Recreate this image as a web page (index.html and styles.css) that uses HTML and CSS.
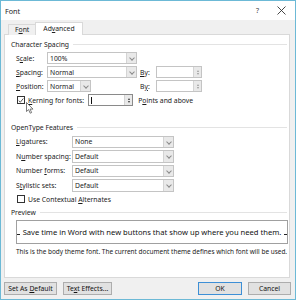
FILE: index.html
```html
<!DOCTYPE html>
<html>
<head>
<meta charset="utf-8">
<link rel="stylesheet" href="styles.css">
</head>
<body>
<div class="window">
  <div class="titlebar">
    <span class="title">Font</span>
    <span class="tb-help">?</span>
    <span class="tb-close"><svg width="9" height="9" viewBox="0 0 9 9"><path d="M0.5 0.5L8.5 8.5M8.5 0.5L0.5 8.5" stroke="#333" stroke-width="0.9"/></svg></span>
  </div>
  <div class="tabs">
    <div class="tab">F<u>o</u>nt</div>
    <div class="tab active">Ad<u>v</u>anced</div>
  </div>
  <div class="panel">
    <div class="group-head"><span>Character Spacing</span><i></i></div>
    <div class="row cs">
      <label class="lab-cs">S<u>c</u>ale:</label>
      <div class="select w90"><span>100%</span><b class="arr"></b></div>
    </div>
    <div class="row cs">
      <label class="lab-cs"><u>S</u>pacing:</label>
      <div class="select w90"><span>Normal</span><b class="arr"></b></div>
      <label class="by"><u>B</u>y:</label>
      <div class="spin"><span></span><b class="sp"><i class="up"></i><i class="dn"></i></b></div>
    </div>
    <div class="row cs">
      <label class="lab-cs"><u>P</u>osition:</label>
      <div class="slot90"><div class="select w44"><span>Normal</span><b class="arr"></b></div></div>
      <label class="by">B<u>y</u>:</label>
      <div class="spin"><span></span><b class="sp"><i class="up"></i><i class="dn"></i></b></div>
    </div>
    <div class="row cs kern">
      <div class="check checked"><svg width="7" height="7" viewBox="0 0 7 7"><path d="M0.8 3.6L2.7 5.5L6.2 1.2" fill="none" stroke="#222" stroke-width="0.9"/></svg></div>
      <label class="lab-k"><u>K</u>erning for fonts:</label>
      <div class="spin kspin"><span class="caret"></span><b class="sp"><i class="up dark"></i><i class="dn dark"></i></b></div>
      <label class="pts">P<u>o</u>ints and above</label>
      <svg class="cursor" width="9" height="12" viewBox="0 0 9 12"><path d="M0.5 0.5L0.5 9.5L2.6 7.6L4.2 11.2L5.6 10.6L4.1 7.1L7 7.1Z" fill="#fff" stroke="#444" stroke-width="0.7" stroke-linejoin="round"/></svg>
    </div>

    <div class="group-head ot"><span>OpenType Features</span><i></i></div>
    <div class="row ot-row">
      <label class="lab-ot"><u>L</u>igatures:</label>
      <div class="select w102"><span>None</span><b class="arr"></b></div>
    </div>
    <div class="row ot-row">
      <label class="lab-ot">N<u>u</u>mber spacing:</label>
      <div class="select w102"><span>Default</span><b class="arr"></b></div>
    </div>
    <div class="row ot-row">
      <label class="lab-ot">Number <u>f</u>orms:</label>
      <div class="select w102"><span>Default</span><b class="arr"></b></div>
    </div>
    <div class="row ot-row">
      <label class="lab-ot">S<u>t</u>ylistic sets:</label>
      <div class="select w102"><span>Default</span><b class="arr"></b></div>
    </div>
    <div class="row ot-row ctx">
      <div class="check"></div>
      <label class="lab-k">Use Contextual <u>A</u>lternates</label>
    </div>

    <div class="group-head pv"><span>Preview</span><i></i></div>
    <div class="preview"><span class="ul-l"></span><span class="pv-text">Save time in Word with new buttons that show up where you need them.</span><span class="ul-r"></span></div>
    <div class="desc">This is the body theme font. The current document theme defines which font will be used.</div>
  </div>
  <div class="buttons">
    <div class="btn b-def"><span>Set As <u>D</u>efault</span></div>
    <div class="btn b-fx"><span>Te<u>x</u>t Effects...</span></div>
    <div class="spacer"></div>
    <div class="btn b-ok"><span>OK</span></div>
    <div class="btn b-cancel"><span>Cancel</span></div>
  </div>
</div>
</body>
</html>
```

FILE: styles.css
```css
* { box-sizing: border-box; }
html, body { margin: 0; padding: 0; background: #fff; }
body { font-family: "Noto Sans", "Open Sans", sans-serif; font-size: 6.8px; color: #1a1a1a; }
u { text-decoration: underline; text-underline-offset: 1px; text-decoration-thickness: 0.5px; }

.window {
  width: 296px; height: 300px;
  border: 1px solid #6cb9d6;
  background: #f0f0f0;
  display: flex; flex-direction: column;
}
.titlebar {
  height: 19px; background: #fff;
  display: flex; align-items: center;
  padding-left: 4px;
  font-size: 7.2px;
}
.title { flex: 1; }
.tb-help { width: 10px; color: #444; font-size: 7px; margin-right: 11px; }
.tb-close { width: 9px; height: 9px; margin-right: 9px; display: flex; }

.tabs {
  display: flex; align-items: flex-end;
  padding-left: 7px; margin-top: 2px; height: 13px;
  position: relative; z-index: 1;
}
.tab {
  height: 11px; padding: 0 6px; line-height: 10px;
  border: 1px solid #d9d9d9; border-bottom: none;
  background: #f0f0f0; color: #222;
}
.tab.active {
  height: 13px; background: #fff; padding: 0 7px; line-height: 12px;
  margin-left: -1px;
}

.panel {
  margin: -1px 5px 0 3px;
  height: 244px;
  background: #fff;
  border: 1px solid #d9d9d9;
  padding: 0 2px 0 6px;
}
.group-head {
  display: flex; align-items: center; height: 10px; margin-top: 4px;
  color: #1a1a1a;
}
.group-head i { flex: 1; height: 1px; background: #e3e3e3; margin-left: 4px; }
.group-head.ot { margin-top: 15px; }
.group-head.pv { margin-top: 1px; }

.row { display: flex; align-items: center; height: 14px; padding-left: 5px; }
.group-head + .row { margin-top: 2px; }
.lab-cs { width: 31px; }
.lab-ot { width: 56px; }
.ot-row { height: 14.5px; }
.group-head.ot + .row { margin-top: 2.5px; }

.select {
  height: 12.5px; border: 1px solid #c4c4c4; background: #fff;
  display: flex; align-items: center; padding-left: 2px;
}
.select span { flex: 1; }
.select .arr {
  width: 10px; height: 100%; border-left: 1px solid #d4d4d4; background: #e9e9e9;
  position: relative;
}
.select .arr::after {
  content: ""; position: absolute; left: 3px; top: 3px;
  width: 3px; height: 3px; border-right: 1px solid #8a8a8a; border-bottom: 1px solid #8a8a8a;
  transform: rotate(45deg);
}
.w90 { width: 90px; }
.w44 { width: 44px; }
.w102 { width: 102px; }
.slot90 { width: 90px; }

.by { width: 16px; margin-left: 3px; }
.spin {
  width: 46px; height: 12.5px; border: 1px solid #c4c4c4; background: #fff;
  display: flex;
}
.spin span { flex: 1; }
.spin .sp {
  width: 8px; background: #e9e9e9; border-left: 1px solid #d4d4d4;
  display: flex; flex-direction: column; align-items: center; justify-content: center; gap: 1px;
}
.sp i { width: 0; height: 0; border-left: 1.5px solid transparent; border-right: 1.5px solid transparent; }
.sp .up { border-bottom: 2px solid #9a9a9a; }
.sp .dn { border-top: 2px solid #9a9a9a; }
.sp .up.dark { border-bottom-color: #333; }
.sp .dn.dark { border-top-color: #333; }

.kern { position: relative; padding-left: 6px; }
.check {
  width: 8px; height: 8px; border: 1px solid #333; background: #fff;
  display: flex; align-items: center; justify-content: center;
}
.lab-k { margin-left: 3px; }
.kspin { width: 45px; margin-left: 4px; border-color: #8a8a8a; }
.kspin .caret { flex: 1; position: relative; }
.kspin .caret::before { content: ""; position: absolute; left: 2px; top: 2px; width: 1px; height: 7px; background: #111; }
.pts { margin-left: 5px; }
.cursor { position: absolute; left: 15px; top: 9px; }

.ctx { padding-left: 6px; margin-top: -0.5px; }

.preview {
  margin: 2px 0 0 5px; width: 272px; height: 24px;
  border: 1px solid #a0a0a0;
  display: flex; align-items: center; justify-content: center;
  font-size: 7.6px; color: #111; white-space: nowrap;
}
.ul-l, .ul-r { width: 3px; height: 1px; background: #222; align-self: flex-end; margin-bottom: 8px; }
.pv-text { margin: 0 3px; }
.desc { margin: 3px 0 0 5px; font-size: 6.45px; white-space: nowrap; }

.buttons {
  display: flex; padding: 0 4px 0 3px; margin-top: 4px;
}
.btn {
  height: 13px; border: 1px solid #adadad; background: #e1e1e1;
  display: flex; align-items: center; justify-content: center;
  color: #111;
}
.b-def { width: 53px; }
.b-fx { width: 49px; margin-left: 6px; }
.spacer { flex: 1; }
.b-ok { width: 44px; border-color: #3d8fd6; }
.b-cancel { width: 43px; margin-left: 6px; }
```
